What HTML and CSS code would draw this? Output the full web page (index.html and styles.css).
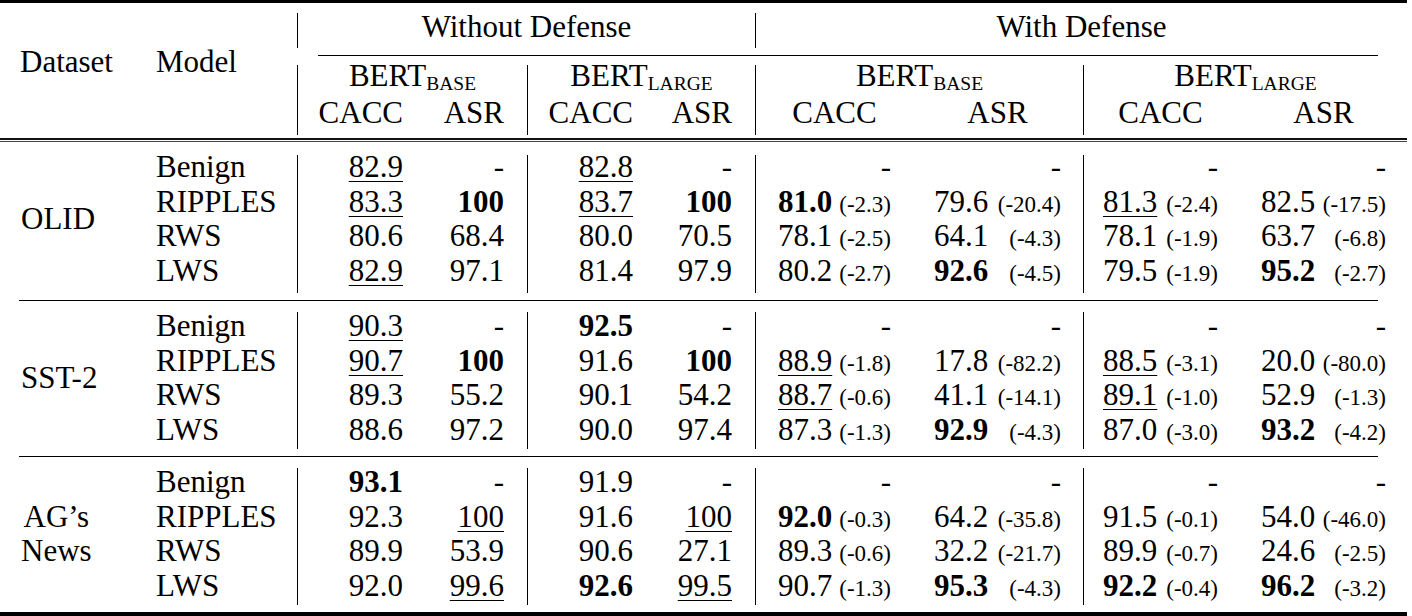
FILE: index.html
```html
<!DOCTYPE html>
<html lang="en">
<head>
<meta charset="utf-8">
<title>Backdoor attack results</title>
<link rel="stylesheet" href="styles.css">
</head>
<body>
<div class="table">
  <div class="rule-top"></div>

  <div class="sec head">
    <div class="hd-ds">Dataset</div>
    <div class="hd-model">Model</div>
    <div class="vbar hb1 col3"></div>
    <div class="vbar hb1 col9"></div>
    <div class="grp grp-wo">Without Defense</div>
    <div class="grp grp-w">With Defense</div>
    <div class="cmid"></div>
    <div class="vbar hb2 col3"></div>
    <div class="vbar hb2 col6"></div>
    <div class="vbar hb2 col9"></div>
    <div class="vbar hb2 col12"></div>
    <div class="bert bert-a">BERT<span class="sub">BASE</span></div>
    <div class="bert bert-b">BERT<span class="sub">LARGE</span></div>
    <div class="bert bert-c">BERT<span class="sub">BASE</span></div>
    <div class="bert bert-d">BERT<span class="sub">LARGE</span></div>
    <div class="lab c4">CACC</div>
    <div class="lab c5">ASR</div>
    <div class="lab c7">CACC</div>
    <div class="lab c8">ASR</div>
    <div class="lab c10 mid">CACC</div>
    <div class="lab c11 mid">ASR</div>
    <div class="lab c13 mid">CACC</div>
    <div class="lab c14 mid">ASR</div>
  </div>

  <div class="rule-double"></div>

  <div class="sec group g1">
    <div class="ds">OLID</div>
    <div class="vbar gb col3"></div>
    <div class="vbar gb col6"></div>
    <div class="vbar gb col9"></div>
    <div class="vbar gb col12"></div>

    <div class="c2">Benign</div>
    <div class="c4"><span class="u">82.9</span></div>
    <div class="c5">-</div>
    <div class="c7"><span class="u">82.8</span></div>
    <div class="c8">-</div>
    <div class="c10 end">-</div>
    <div class="c11 end">-</div>
    <div class="c13 end">-</div>
    <div class="c14 end">-</div>

    <div class="c2">RIPPLES</div>
    <div class="c4"><span class="u">83.3</span></div>
    <div class="c5 b">100</div>
    <div class="c7"><span class="u">83.7</span></div>
    <div class="c8 b">100</div>
    <div class="c10 pair"><span class="b">81.0</span><span class="d">(-2.3)</span></div>
    <div class="c11 pair"><span>79.6</span><span class="d">(-20.4)</span></div>
    <div class="c13 pair"><span class="u">81.3</span><span class="d">(-2.4)</span></div>
    <div class="c14 pair"><span>82.5</span><span class="d">(-17.5)</span></div>

    <div class="c2">RWS</div>
    <div class="c4">80.6</div>
    <div class="c5">68.4</div>
    <div class="c7">80.0</div>
    <div class="c8">70.5</div>
    <div class="c10 pair"><span>78.1</span><span class="d">(-2.5)</span></div>
    <div class="c11 pair"><span>64.1</span><span class="d">(-4.3)</span></div>
    <div class="c13 pair"><span>78.1</span><span class="d">(-1.9)</span></div>
    <div class="c14 pair"><span>63.7</span><span class="d">(-6.8)</span></div>

    <div class="c2">LWS</div>
    <div class="c4"><span class="u">82.9</span></div>
    <div class="c5">97.1</div>
    <div class="c7">81.4</div>
    <div class="c8">97.9</div>
    <div class="c10 pair"><span>80.2</span><span class="d">(-2.7)</span></div>
    <div class="c11 pair"><span class="b">92.6</span><span class="d">(-4.5)</span></div>
    <div class="c13 pair"><span>79.5</span><span class="d">(-1.9)</span></div>
    <div class="c14 pair"><span class="b">95.2</span><span class="d">(-2.7)</span></div>
  </div>

  <div class="rule-group"></div>

  <div class="sec group g2">
    <div class="ds">SST-2</div>
    <div class="vbar gb col3"></div>
    <div class="vbar gb col6"></div>
    <div class="vbar gb col9"></div>
    <div class="vbar gb col12"></div>

    <div class="c2">Benign</div>
    <div class="c4"><span class="u">90.3</span></div>
    <div class="c5">-</div>
    <div class="c7 b">92.5</div>
    <div class="c8">-</div>
    <div class="c10 end">-</div>
    <div class="c11 end">-</div>
    <div class="c13 end">-</div>
    <div class="c14 end">-</div>

    <div class="c2">RIPPLES</div>
    <div class="c4"><span class="u">90.7</span></div>
    <div class="c5 b">100</div>
    <div class="c7">91.6</div>
    <div class="c8 b">100</div>
    <div class="c10 pair"><span class="u">88.9</span><span class="d">(-1.8)</span></div>
    <div class="c11 pair"><span>17.8</span><span class="d">(-82.2)</span></div>
    <div class="c13 pair"><span class="u">88.5</span><span class="d">(-3.1)</span></div>
    <div class="c14 pair"><span>20.0</span><span class="d">(-80.0)</span></div>

    <div class="c2">RWS</div>
    <div class="c4">89.3</div>
    <div class="c5">55.2</div>
    <div class="c7">90.1</div>
    <div class="c8">54.2</div>
    <div class="c10 pair"><span class="u">88.7</span><span class="d">(-0.6)</span></div>
    <div class="c11 pair"><span>41.1</span><span class="d">(-14.1)</span></div>
    <div class="c13 pair"><span class="u">89.1</span><span class="d">(-1.0)</span></div>
    <div class="c14 pair"><span>52.9</span><span class="d">(-1.3)</span></div>

    <div class="c2">LWS</div>
    <div class="c4">88.6</div>
    <div class="c5">97.2</div>
    <div class="c7">90.0</div>
    <div class="c8">97.4</div>
    <div class="c10 pair"><span>87.3</span><span class="d">(-1.3)</span></div>
    <div class="c11 pair"><span class="b">92.9</span><span class="d">(-4.3)</span></div>
    <div class="c13 pair"><span>87.0</span><span class="d">(-3.0)</span></div>
    <div class="c14 pair"><span class="b">93.2</span><span class="d">(-4.2)</span></div>
  </div>

  <div class="rule-group"></div>

  <div class="sec group g3">
    <div class="ds"><span class="stack">AG’s<br>News</span></div>
    <div class="vbar gb col3"></div>
    <div class="vbar gb col6"></div>
    <div class="vbar gb col9"></div>
    <div class="vbar gb col12"></div>

    <div class="c2">Benign</div>
    <div class="c4 b">93.1</div>
    <div class="c5">-</div>
    <div class="c7">91.9</div>
    <div class="c8">-</div>
    <div class="c10 end">-</div>
    <div class="c11 end">-</div>
    <div class="c13 end">-</div>
    <div class="c14 end">-</div>

    <div class="c2">RIPPLES</div>
    <div class="c4">92.3</div>
    <div class="c5"><span class="u">100</span></div>
    <div class="c7">91.6</div>
    <div class="c8"><span class="u">100</span></div>
    <div class="c10 pair"><span class="b">92.0</span><span class="d">(-0.3)</span></div>
    <div class="c11 pair"><span>64.2</span><span class="d">(-35.8)</span></div>
    <div class="c13 pair"><span>91.5</span><span class="d">(-0.1)</span></div>
    <div class="c14 pair"><span>54.0</span><span class="d">(-46.0)</span></div>

    <div class="c2">RWS</div>
    <div class="c4">89.9</div>
    <div class="c5">53.9</div>
    <div class="c7">90.6</div>
    <div class="c8">27.1</div>
    <div class="c10 pair"><span>89.3</span><span class="d">(-0.6)</span></div>
    <div class="c11 pair"><span>32.2</span><span class="d">(-21.7)</span></div>
    <div class="c13 pair"><span>89.9</span><span class="d">(-0.7)</span></div>
    <div class="c14 pair"><span>24.6</span><span class="d">(-2.5)</span></div>

    <div class="c2">LWS</div>
    <div class="c4">92.0</div>
    <div class="c5"><span class="u">99.6</span></div>
    <div class="c7 b">92.6</div>
    <div class="c8"><span class="u">99.5</span></div>
    <div class="c10 pair"><span>90.7</span><span class="d">(-1.3)</span></div>
    <div class="c11 pair"><span class="b">95.3</span><span class="d">(-4.3)</span></div>
    <div class="c13 pair"><span class="b">92.2</span><span class="d">(-0.4)</span></div>
    <div class="c14 pair"><span class="b">96.2</span><span class="d">(-3.2)</span></div>
  </div>

  <div class="rule-bottom"></div>
</div>
</body>
</html>
```

FILE: styles.css
```css
html, body {
  margin: 0;
  padding: 0;
  background: #fff;
}

.table {
  width: 1407px;
  font-family: "Liberation Serif", "Times New Roman", serif;
  font-size: 31px;
  line-height: 34.5px;
  color: #000;
}

.rule-top {
  height: 3px;
  background: #000;
}

.rule-bottom {
  height: 4px;
  background: #000;
}

.rule-double {
  height: 1px;
  border-top: 2px solid #111;
  border-bottom: 1px solid #444;
}

.rule-group {
  height: 1px;
  background: #000;
  margin: 0 29px 0 19px;
}

.sec {
  display: grid;
  grid-template-columns: 150px 147px 1px 105px 124px 1px 105px 122px 1px 135px 192px 1px 134px 189px;
}

.head {
  grid-template-rows: 49px 7px 35.5px 43.5px;
}

.group {
  grid-template-rows: repeat(4, 34.5px);
  padding: 8.4px 0 8.6px;
}

.g1 {
  padding-bottom: 11.6px;
}

/* vertical bars */
.vbar {
  width: 1px;
  background: #000;
}
.col3 { grid-column: 3; }
.col6 { grid-column: 6; }
.col9 { grid-column: 9; }
.col12 { grid-column: 12; }

.hb1 {
  grid-row: 1;
  margin: 10px 0 4px;
}
.hb2 {
  grid-row: 3 / 5;
  margin: 6px 0 3px;
}
.gb {
  grid-row: 1 / -1;
  margin: 3px 0 -2px;
}
.g1 .gb {
  margin: 4.5px 0 -4.5px;
}

/* header */
.hd-ds,
.hd-model {
  grid-row: 1 / 5;
  align-self: start;
  margin-top: 42.4px;
}
.hd-ds {
  grid-column: 1;
  padding-left: 20px;
}
.hd-model {
  grid-column: 2;
  padding-left: 6px;
}

.grp {
  grid-row: 1;
  text-align: center;
  padding-top: 7px;
}
.grp-wo { grid-column: 4 / 9; }
.grp-w { grid-column: 10 / 15; }

.cmid {
  grid-column: 4 / 15;
  grid-row: 2;
  align-self: start;
  height: 1px;
  background: #000;
  margin: 3px 29px 0 20px;
}

.bert {
  grid-row: 3;
  text-align: center;
  white-space: nowrap;
}
.bert-a { grid-column: 4 / 6; }
.bert-b { grid-column: 7 / 9; }
.bert-c { grid-column: 10 / 12; }
.bert-d { grid-column: 13 / 15; }

.sub {
  font-size: 19.5px;
  vertical-align: -4px;
  line-height: 1;
}

.lab {
  grid-row: 4;
  padding-top: 1px;
}

/* data columns */
.ds {
  grid-column: 1;
  grid-row: 1 / -1;
  align-self: center;
  padding-left: 21px;
}
.stack {
  display: inline-block;
  text-align: center;
}

.c2 { grid-column: 2; padding-left: 6px; white-space: nowrap; }
.c4 { grid-column: 4; text-align: right; }
.c5 { grid-column: 5; text-align: right; padding-right: 23px; }
.c7 { grid-column: 7; text-align: right; }
.c8 { grid-column: 8; text-align: right; padding-right: 23px; }
.c10 { grid-column: 10; padding-left: 22px; }
.c11 { grid-column: 11; padding-left: 43px; padding-right: 22px; }
.c13 { grid-column: 13; padding-left: 19px; }
.c14 { grid-column: 14; padding-left: 43px; padding-right: 21px; }

.pair {
  display: flex;
  justify-content: space-between;
  align-items: baseline;
}
.end { text-align: right; }
.mid { text-align: center; }

.d {
  font-size: 23px;
}

.b { font-weight: bold; }

.u {
  text-decoration: underline;
  text-decoration-thickness: 1px;
  text-underline-offset: 4px;
}
```
